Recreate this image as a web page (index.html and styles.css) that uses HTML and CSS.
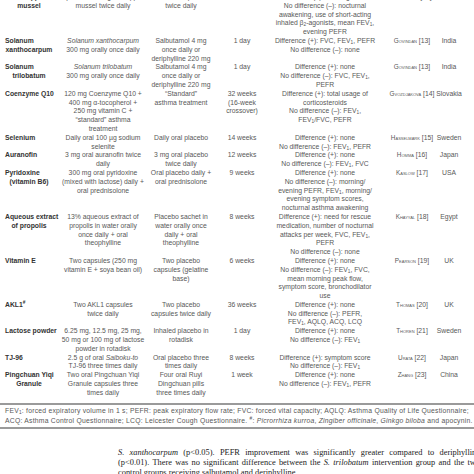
FILE: index.html
```html
<!DOCTYPE html>
<html lang="en">
<head>
<meta charset="utf-8">
<title>Table</title>
<link rel="stylesheet" href="styles.css">
</head>
<body>
<div class="page">
  <div class="tbl">
    <div class="row">
      <div class="c1"><span class="l1">Green-lipped</span><span class="l2">mussel</span></div>
      <div class="c"><div class="t">Lipid extract of green-lipped<br>mussel twice daily</div></div>
      <div class="c"><div class="t">Olive oil capsules<br>twice daily</div></div>
      <div class="c"><div class="t">8 weeks</div></div>
      <div class="c"><div class="t">Difference (+): morning PEFR<br>No difference (–): nocturnal<br>awakening, use of short-acting<br>inhaled β<span class="sub">2</span>-agonists, mean FEV<span class="sub">1</span>,<br>evening PEFR</div></div>
      <div class="c"><div class="t"><span class="au">Emelyanov</span> [12]</div></div>
      <div class="c"><div class="t">Russia</div></div>
    </div>
    <div class="row">
      <div class="c1"><span class="l1">Solanum</span><span class="l2">xanthocarpum</span></div>
      <div class="c"><div class="t"><i>Solanum xanthocarpum</i><br>300 mg orally once daily</div></div>
      <div class="c"><div class="t">Salbutamol 4 mg<br>once daily or<br>deriphylline 220 mg</div></div>
      <div class="c"><div class="t">1 day</div></div>
      <div class="c"><div class="t">Difference (+): FVC, FEV<span class="sub">1</span>, PEFR<br>No difference (–): none</div></div>
      <div class="c"><div class="t"><span class="au">Govindan</span> [13]</div></div>
      <div class="c"><div class="t">India</div></div>
    </div>
    <div class="row">
      <div class="c1"><span class="l1">Solanum</span><span class="l2">trilobatum</span></div>
      <div class="c"><div class="t"><i>Solanum trilobatum</i><br>300 mg orally once daily</div></div>
      <div class="c"><div class="t">Salbutamol 4 mg<br>once daily or<br>deriphylline 220 mg</div></div>
      <div class="c"><div class="t">1 day</div></div>
      <div class="c"><div class="t">Difference (+): none<br>No difference (–): FVC, FEV<span class="sub">1</span>,<br>PEFR</div></div>
      <div class="c"><div class="t"><span class="au">Govindan</span> [13]</div></div>
      <div class="c"><div class="t">India</div></div>
    </div>
    <div class="row">
      <div class="c1"><span class="l1">Coenzyme Q10</span></div>
      <div class="c"><div class="t">120 mg Coenzyme Q10 +<br>400 mg α-tocopherol +<br>250 mg vitamin C +<br>“standard” asthma<br>treatment</div></div>
      <div class="c"><div class="t">“Standard”<br>asthma treatment</div></div>
      <div class="c"><div class="t">32 weeks<br>(16-week<br>crossover)</div></div>
      <div class="c"><div class="t">Difference (+): total usage of<br>corticosteroids<br>No difference (–): FEV<span class="sub">1</span>,<br>FEV<span class="sub">1</span>/FVC, PEFR</div></div>
      <div class="c"><div class="t"><span class="au">Gvozdjakova</span> [14]</div></div>
      <div class="c"><div class="t">Slovakia</div></div>
    </div>
    <div class="row">
      <div class="c1"><span class="l1">Selenium</span></div>
      <div class="c"><div class="t">Daily oral 100 µg sodium<br>selenite</div></div>
      <div class="c"><div class="t">Daily oral placebo</div></div>
      <div class="c"><div class="t">14 weeks</div></div>
      <div class="c"><div class="t">Difference (+): none<br>No difference (–): FEV<span class="sub">1</span>, PEFR</div></div>
      <div class="c"><div class="t"><span class="au">Hasselmark</span> [15]</div></div>
      <div class="c"><div class="t">Sweden</div></div>
    </div>
    <div class="row">
      <div class="c1"><span class="l1">Auranofin</span></div>
      <div class="c"><div class="t">3 mg oral auranofin twice<br>daily</div></div>
      <div class="c"><div class="t">3 mg oral placebo<br>twice daily</div></div>
      <div class="c"><div class="t">12 weeks</div></div>
      <div class="c"><div class="t">Difference (+): none<br>No difference (–): FEV<span class="sub">1</span>, FVC</div></div>
      <div class="c"><div class="t"><span class="au">Homma</span> [16]</div></div>
      <div class="c"><div class="t">Japan</div></div>
    </div>
    <div class="row">
      <div class="c1"><span class="l1">Pyridoxine</span><span class="l2">(vitamin B6)</span></div>
      <div class="c"><div class="t">300 mg oral pyridoxine<br>(mixed with lactose) daily +<br>oral prednisolone</div></div>
      <div class="c"><div class="t">Oral placebo daily +<br>oral prednisolone</div></div>
      <div class="c"><div class="t">9 weeks</div></div>
      <div class="c"><div class="t">Difference (+): none<br>No difference (–): morning/<br>evening PEFR, FEV<span class="sub">1</span>, morning/<br>evening symptom scores,<br>nocturnal asthma awakening</div></div>
      <div class="c"><div class="t"><span class="au">Kaslow</span> [17]</div></div>
      <div class="c"><div class="t">USA</div></div>
    </div>
    <div class="row">
      <div class="c1"><span class="l1">Aqueous extract</span><span class="l2">of propolis</span></div>
      <div class="c"><div class="t">13% aqueous extract of<br>propolis in water orally<br>once daily + oral<br>theophylline</div></div>
      <div class="c"><div class="t">Placebo sachet in<br>water orally once<br>daily + oral<br>theophylline</div></div>
      <div class="c"><div class="t">8 weeks</div></div>
      <div class="c"><div class="t">Difference (+): need for rescue<br>medication, number of nocturnal<br>attacks per week, FVC, FEV<span class="sub">1</span>,<br>PEFR<br>No difference (–): none</div></div>
      <div class="c"><div class="t"><span class="au">Khayyal</span> [18]</div></div>
      <div class="c"><div class="t">Egypt</div></div>
    </div>
    <div class="row">
      <div class="c1"><span class="l1">Vitamin E</span></div>
      <div class="c"><div class="t">Two capsules (250 mg<br>vitamin E + soya bean oil)</div></div>
      <div class="c"><div class="t">Two placebo<br>capsules (gelatine<br>base)</div></div>
      <div class="c"><div class="t">6 weeks</div></div>
      <div class="c"><div class="t">Difference (+): none<br>No difference (–): FEV<span class="sub">1</span>, FVC,<br>mean morning peak flow,<br>symptom score, bronchodilator<br>use</div></div>
      <div class="c"><div class="t"><span class="au">Pearson</span> [19]</div></div>
      <div class="c"><div class="t">UK</div></div>
    </div>
    <div class="row">
      <div class="c1"><span class="l1">AKL1<sup class="sup">#</sup></span></div>
      <div class="c"><div class="t">Two AKL1 capsules<br>twice daily</div></div>
      <div class="c"><div class="t">Two placebo<br>capsules twice daily</div></div>
      <div class="c"><div class="t">36 weeks</div></div>
      <div class="c"><div class="t">Difference (+): none<br>No difference (–): PEFR,<br>FEV<span class="sub">1</span>, AQLQ, ACQ, LCQ</div></div>
      <div class="c"><div class="t"><span class="au">Thomas</span> [20]</div></div>
      <div class="c"><div class="t">UK</div></div>
    </div>
    <div class="row">
      <div class="c1"><span class="l1">Lactose powder</span></div>
      <div class="c"><div class="t">6.25 mg, 12.5 mg, 25 mg,<br>50 mg or 100 mg of lactose<br>powder in rotadisk</div></div>
      <div class="c"><div class="t">Inhaled placebo in<br>rotadisk</div></div>
      <div class="c"><div class="t">1 day</div></div>
      <div class="c"><div class="t">Difference (+): none<br>No difference (–): FEV<span class="sub">1</span></div></div>
      <div class="c"><div class="t"><span class="au">Thoren</span> [21]</div></div>
      <div class="c"><div class="t">Sweden</div></div>
    </div>
    <div class="row">
      <div class="c1"><span class="l1">TJ-96</span></div>
      <div class="c"><div class="t">2.5 g of oral <i>Saiboku-to</i><br>TJ-96 three times daily</div></div>
      <div class="c"><div class="t">Oral placebo three<br>times daily</div></div>
      <div class="c"><div class="t">8 weeks</div></div>
      <div class="c"><div class="t">Difference (+): symptom score<br>No difference (–): FEV<span class="sub">1</span></div></div>
      <div class="c"><div class="t"><span class="au">Urata</span> [22]</div></div>
      <div class="c"><div class="t">Japan</div></div>
    </div>
    <div class="row">
      <div class="c1"><span class="l1">Pingchuan Yiqi</span><span class="l2">Granule</span></div>
      <div class="c"><div class="t">Two oral Pingchuan Yiqi<br>Granule capsules three<br>times daily</div></div>
      <div class="c"><div class="t">Four oral Ruyi<br>Dingchuan pills<br>three times daily</div></div>
      <div class="c"><div class="t">1 week</div></div>
      <div class="c"><div class="t">Difference (+): none<br>No difference (–): FEV<span class="sub">1</span>, PEFR</div></div>
      <div class="c"><div class="t"><span class="au">Zhang</span> [23]</div></div>
      <div class="c"><div class="t">China</div></div>
    </div>
  </div>

  <div class="foot">
    <div class="fl">FEV<span class="sub">1</span>: forced expiratory volume in 1 s; PEFR: peak expiratory flow rate; FVC: forced vital capacity; AQLQ: Asthma Quality of Life Questionnaire;</div>
    <div class="fl">ACQ: Asthma Control Questionnaire; LCQ: Leicester Cough Questionnaire. <sup class="sup">#</sup>: <i>Picrorrhiza kurroa</i>, <i>Zingiber officinale</i>, <i>Ginkgo biloba</i> and apocynin.</div>
  </div>

  <div class="para">
    <p class="pl"><i>S. xanthocarpum</i> (p&lt;0.05). PEFR improvement was significantly greater compared to deriphylline</p>
    <p class="pl">(p&lt;0.01). There was no significant difference between the <i>S. trilobatum</i> intervention group and the two</p>
    <p class="pl last">control groups receiving salbutamol and deriphylline.</p>
  </div>
</div>
</body>
</html>
```

FILE: styles.css
```css
html, body {
  margin: 0;
  padding: 0;
  background: #ffffff;
}
body {
  width: 474px;
  height: 474px;
  overflow: hidden;
}
.page {
  font-family: "Liberation Sans", Arial, sans-serif;
  font-size: 6.8px;
  line-height: 8.8px;
  color: #585858;
}
.tbl {
  margin-top: -7px;
}
.row {
  display: grid;
  grid-template-columns: 60px 86px 70px 52px 114px 60px 14px;
}
.c {
  display: flex;
  justify-content: center;
  align-items: flex-start;
  min-width: 0;
}
.t {
  white-space: nowrap;
  text-align: center;
}
.c1 {
  padding-left: 5px;
  padding-right: 7px;
  font-weight: bold;
  color: #333333;
  min-width: 0;
}
.l1 {
  display: block;
  text-align: left;
  white-space: nowrap;
}
.l2 {
  display: block;
  text-align: center;
  white-space: nowrap;
}
.au {
  font-variant: small-caps;
  font-size: 6.4px;
}
.sub {
  font-size: 70%;
  line-height: 0;
  vertical-align: -1px;
}
.sup {
  font-size: 70%;
  line-height: 0;
  vertical-align: 3px;
}
.foot {
  margin-top: 5.6px;
  border-top: 2px solid #9a9a9a;
  border-bottom: 2px solid #9a9a9a;
  padding: 1px 0 1px 5px;
  line-height: 10px;
  letter-spacing: 0.23px;
  white-space: nowrap;
}
.para {
  margin: 19px 0 0 118px;
  width: 362px;
  font-family: "Liberation Serif", "Times New Roman", serif;
  font-size: 8.4px;
  line-height: 9.7px;
  color: #222222;
}
.pl {
  margin: 0;
  white-space: nowrap;
  text-align: justify;
  text-align-last: justify;
}
.pl.last {
  text-align-last: left;
}
```
